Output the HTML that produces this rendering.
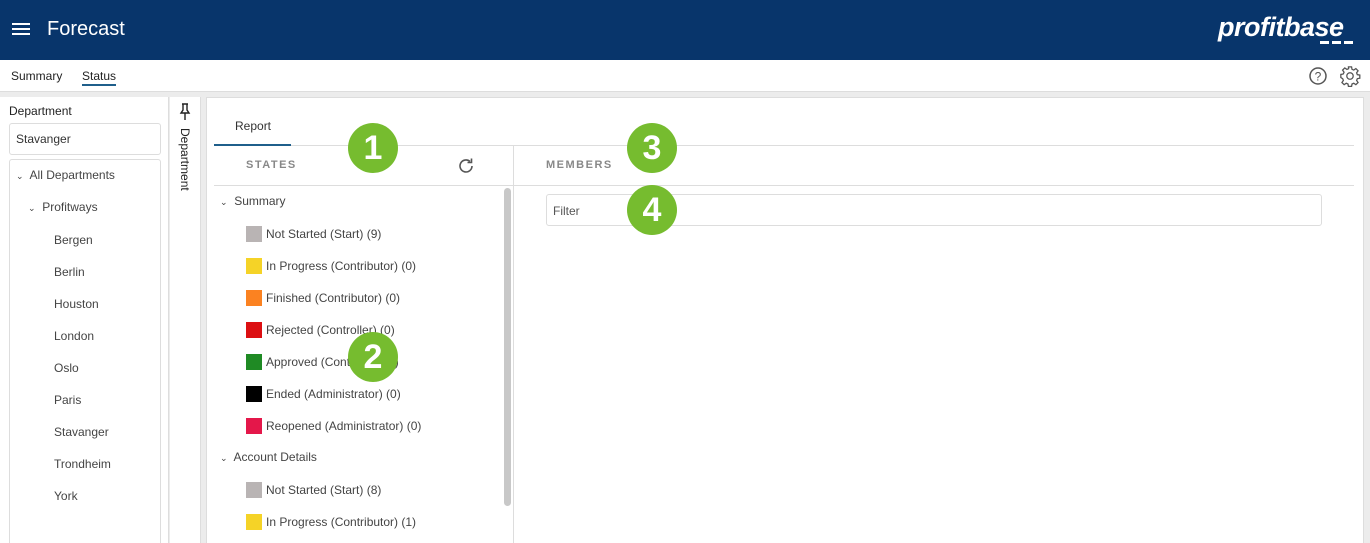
<!DOCTYPE html><html><head><style>
*{box-sizing:border-box;margin:0;padding:0}
html,body{width:1370px;height:543px;overflow:hidden}
body{background:#ececec;font-family:"Liberation Sans",sans-serif;font-size:12px;color:#333;position:relative}
.a{position:absolute}
.hdr{left:0;top:0;width:1370px;height:60px;background:#08356b}
.c{position:absolute;width:50px;height:50px;border-radius:50%;background:#76bc2f;color:#fff;font-weight:bold;font-size:34px;text-align:center;line-height:50px}
.row{position:absolute;left:246px;height:16px;line-height:16px;font-size:12px;color:#444}
.row i{display:inline-block;width:16px;height:16px;vertical-align:top;margin-right:4px}
.dep{position:absolute;left:54px;font-size:12px;color:#444}
</style></head><body>
<div class="a hdr"></div>
<div class="a" style="left:12px;top:23px;width:18px;height:2px;background:#fff;box-shadow:0 5px 0 #fff,0 10px 0 #fff"></div>
<div class="a" style="left:47px;top:18px;color:#fff;font-size:20px">Forecast</div>
<div class="a" style="left:1218px;top:12px;color:#fff;font-size:27px;font-weight:bold;font-style:italic;letter-spacing:-0.5px">profitbase</div>
<div class="a" style="left:1320px;top:41px;width:34px;height:3px;background:repeating-linear-gradient(90deg,#fff 0 9px,transparent 9px 12px)"></div>
<div class="a" style="left:0;top:60px;width:1370px;height:32px;background:#fff;border-bottom:1px solid #ddd"></div>
<div class="a" style="left:11px;top:69px;font-size:12px;color:#222">Summary</div>
<div class="a" style="left:82px;top:69px;font-size:12px;color:#222;border-bottom:2px solid #1f5f8b;padding-bottom:1px">Status</div>
<svg class="a" style="left:1308px;top:66px" width="20" height="20" viewBox="0 0 20 20"><circle cx="10" cy="10" r="8" fill="none" stroke="#555" stroke-width="1.5"/><text x="10" y="14.5" font-size="12" text-anchor="middle" fill="#555" font-family="Liberation Sans">?</text></svg>
<svg class="a" style="left:1339px;top:65px" width="22" height="22" viewBox="0 0 24 24"><path fill="none" stroke="#555" stroke-width="1.4" d="M10.3 2h3.4l.5 2.7 1.9.8 2.3-1.6 2.4 2.4-1.6 2.3.8 1.9 2.7.5v3.4l-2.7.5-.8 1.9 1.6 2.3-2.4 2.4-2.3-1.6-1.9.8-.5 2.7h-3.4l-.5-2.7-1.9-.8-2.3 1.6-2.4-2.4 1.6-2.3-.8-1.9L2 13.7v-3.4l2.7-.5.8-1.9-1.6-2.3 2.4-2.4 2.3 1.6 1.9-.8z"/><circle cx="12" cy="12" r="3.5" fill="none" stroke="#555" stroke-width="1.4"/></svg>
<div class="a" style="left:0;top:97px;width:169px;height:446px;background:#fff;border-right:1px solid #ddd"></div>
<div class="a" style="left:9px;top:104px;font-size:12px;color:#222">Department</div>
<div class="a" style="left:9px;top:123px;width:152px;height:32px;border:1px solid #ddd;border-radius:3px;padding:8px 6px;color:#333">Stavanger</div>
<div class="a" style="left:9px;top:159px;width:152px;height:390px;border:1px solid #ddd;border-radius:3px"></div>
<div class="a" style="left:16px;top:168px;font-size:12px;color:#444"><span style="font-size:9px">&#8964;</span>&nbsp; All Departments</div>
<div class="a" style="left:28px;top:200px;font-size:12px;color:#444"><span style="font-size:9px">&#8964;</span>&nbsp; Profitways</div>
<div class="dep" style="top:233px">Bergen</div><div class="dep" style="top:265px">Berlin</div><div class="dep" style="top:297px">Houston</div><div class="dep" style="top:329px">London</div><div class="dep" style="top:361px">Oslo</div><div class="dep" style="top:393px">Paris</div><div class="dep" style="top:425px">Stavanger</div><div class="dep" style="top:457px">Trondheim</div><div class="dep" style="top:489px">York</div>
<div class="a" style="left:170px;top:97px;width:31px;height:446px;background:#fff;border-right:1px solid #ddd"></div>
<svg class="a" style="left:179px;top:103px" width="12" height="18" viewBox="0 0 12 18"><path d="M3 1h6M4 1v6l-2 3h8l-2-3V1M6 10v7" fill="none" stroke="#222" stroke-width="1.4"/></svg>
<div class="a" style="left:178px;top:128px;writing-mode:vertical-rl;font-size:12px;color:#222">Department</div>
<div class="a" style="left:206px;top:97px;width:1158px;height:460px;background:#fff;border:1px solid #ddd"></div>
<div class="a" style="left:235px;top:119px;font-size:12px;color:#333">Report</div>
<div class="a" style="left:214px;top:145px;width:1140px;height:1px;background:#ddd"></div>
<div class="a" style="left:214px;top:144px;width:77px;height:2px;background:#1f5f8b"></div>
<div class="a" style="left:246px;top:159px;font-size:11px;font-weight:bold;letter-spacing:1.5px;color:#888">STATES</div>
<div class="a" style="left:546px;top:159px;font-size:11px;font-weight:bold;letter-spacing:1.5px;color:#888">MEMBERS</div>
<svg class="a" style="left:456px;top:156px" width="20" height="20" viewBox="0 0 20 20"><path d="M16 10a6 6 0 1 1-2-4.5" fill="none" stroke="#555" stroke-width="1.6"/><path d="M15.5 2.5v4h-4" fill="none" stroke="#555" stroke-width="1.6"/></svg>
<div class="a" style="left:214px;top:185px;width:1140px;height:1px;background:#ddd"></div>
<div class="a" style="left:513px;top:146px;width:1px;height:397px;background:#ddd"></div>
<div class="a" style="left:504px;top:188px;width:7px;height:318px;background:#c8c8c8;border-radius:4px"></div>
<div class="a" style="left:546px;top:194px;width:776px;height:32px;border:1px solid #ddd;border-radius:3px;padding:9px 6px;color:#555">Filter</div>
<div class="a" style="left:220px;top:194px;font-size:12px;color:#444"><span style="font-size:9px">&#8964;</span>&nbsp; Summary</div>
<div class="row" style="top:226px"><i style="background:#b9b4b4"></i>Not Started (Start) (9)</div>
<div class="row" style="top:258px"><i style="background:#f5d327"></i>In Progress (Contributor) (0)</div>
<div class="row" style="top:290px"><i style="background:#fb8221"></i>Finished (Contributor) (0)</div>
<div class="row" style="top:322px"><i style="background:#dc0f12"></i>Rejected (Controller) (0)</div>
<div class="row" style="top:354px"><i style="background:#1f8a24"></i>Approved (Controller) (0)</div>
<div class="row" style="top:386px"><i style="background:#000"></i>Ended (Administrator) (0)</div>
<div class="row" style="top:418px"><i style="background:#e4174a"></i>Reopened (Administrator) (0)</div>
<div class="a" style="left:220px;top:450px;font-size:12px;color:#444"><span style="font-size:9px">&#8964;</span>&nbsp; Account Details</div>
<div class="row" style="top:482px"><i style="background:#b9b4b4"></i>Not Started (Start) (8)</div>
<div class="row" style="top:514px"><i style="background:#f5d327"></i>In Progress (Contributor) (1)</div>
<div class="c" style="left:348px;top:123px">1</div>
<div class="c" style="left:348px;top:332px">2</div>
<div class="c" style="left:627px;top:123px">3</div>
<div class="c" style="left:627px;top:185px">4</div>
</body></html>
